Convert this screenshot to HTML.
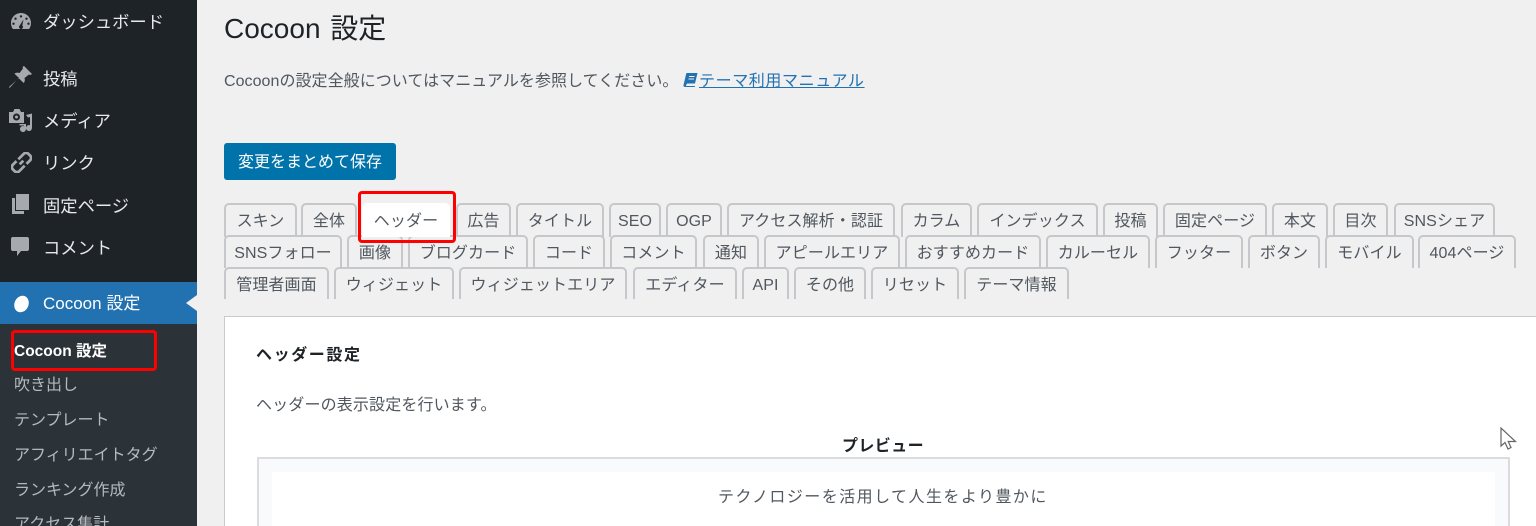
<!DOCTYPE html>
<html lang="ja"><head><meta charset="utf-8"><title>Cocoon 設定</title>
<style>
html,body{margin:0;padding:0;width:1536px;height:526px;overflow:hidden}
body{position:relative;background:#f0f0f1;font-family:"Liberation Sans","Noto Sans CJK JP",sans-serif;font-size:16px;color:#50575e}
#wrap{position:absolute;left:0;top:0;width:1536px;height:526px;overflow:hidden}
.a{position:absolute;white-space:nowrap;line-height:24px}
#side{position:absolute;left:0;top:0;width:197px;height:526px;background:#1d2327}
#sub{position:absolute;left:0;top:324px;width:197px;height:202px;background:#2c3338}
#act{position:absolute;left:0;top:282px;width:197px;height:42px;background:#2271b1}
#arrow{position:absolute;left:186px;top:295px;width:0;height:0;border:8px solid transparent;border-right:11px solid #f0f0f1;border-left:0}
.m{color:#e8e9ea;font-size:17.3px;left:43px}
.s{color:#b4b9be;font-size:16px;left:14px}
svg{position:absolute}
.t{position:absolute;box-sizing:border-box;border:2px solid #c6c7ca;border-bottom:0;border-radius:5px 5px 0 0;text-align:center;line-height:33px;font-size:16px;color:#50575e;white-space:nowrap;overflow:visible;letter-spacing:.1px}
.r1{top:203px;height:34px}.r2{top:235px;height:33px}.r3{top:267px;height:32px}
.on{background:#fff;z-index:2;border-color:#fff;color:#50575e}
.red{position:absolute;box-sizing:border-box;border:3px solid #f00;border-radius:4px;z-index:5}
#panel{position:absolute;left:224px;top:316px;width:1320px;height:220px;background:#fff;border:1px solid #c8cbce;box-sizing:border-box}
</style></head><body><div id="wrap">
<div id="side"></div><div id="sub"></div><div id="act"></div><div id="arrow"></div>

<svg style="left:10px;top:12px" width="22" height="18" viewBox="0 0 22 18"><path fill="#a7aaad" fill-rule="evenodd" d="M11 1C5.500 1 1 5.400 1 11c0 2.300.7 4.400 1.900 6h16.200c1.200-1.600 1.900-3.700 1.900-6 0-5.600-4.500-10-10-10zM11 3.200a1.200 1.200 0 110 2.400 1.200 1.200 0 010-2.400zM5.500 5.500a1.200 1.200 0 110 2.400 1.200 1.200 0 010-2.400zM16.500 5.500a1.200 1.200 0 110 2.400 1.200 1.200 0 010-2.400zM3.500 10.500a1.200 1.200 0 110 2.400 1.200 1.200 0 010-2.400zM18.500 10.500a1.200 1.200 0 110 2.400 1.200 1.200 0 010-2.400zM13.500 7.500l-1.200 6a2 2 0 11-2.600 0z"/></svg>
<svg style="left:9px;top:66px" width="24" height="23" viewBox="0 0 24 23"><path fill="#a7aaad" d="M15 0l8 8-1.500 1-1.500-.5-4.500 3.500c.7 2 .3 3.800-.8 5L9.500 12 1 21.500 0 22l.5-1.500L10 12 5.500 7.800c1.300-1.200 3-1.500 5-.8l3.500-4.500-.5-1.500z"/></svg>
<svg style="left:9px;top:109px" width="24" height="23" viewBox="0 0 24 23"><path fill="#a7aaad" fill-rule="evenodd" d="M4 3l1.500-3h5L12 3h3v11H0V3zM7.500 4.500a3.500 3.500 0 100 7 3.500 3.500 0 000-7zM7.500 6.500a1.500 1.500 0 110 3 1.500 1.500 0 010-3zM17 6l6-1.500V19a3 3 0 11-2-2.800V8l-2 .5zM10.500 15h6.500v5a3 3 0 11-2-2.800V16.500h-4.500z"/></svg>
<svg style="left:11px;top:152px" width="21" height="21" viewBox="0 0 23 23"><g fill="none" stroke="#a7aaad" stroke-width="3"><path d="M9.500 13.500l4-4M8 8l6-6a3.500 3.500 0 015 0l2 2a3.500 3.500 0 010 5l-4 4"/><path d="M15 15l-6 6a3.500 3.500 0 01-5 0l-2-2a3.500 3.500 0 010-5l4-4"/></g></svg>
<svg style="left:11px;top:194px" width="18" height="21" viewBox="0 0 18 21"><path fill="#a7aaad" d="M5 0h13v16H5zM1 4h3v13h9v3H1z"/></svg>
<svg style="left:11px;top:236px" width="18" height="21" viewBox="0 0 18 21"><path fill="#a7aaad" d="M2 1h14a2 2 0 012 2v10a2 2 0 01-2 2h-6l-4 5v-5H2a2 2 0 01-2-2V3a2 2 0 012-2z"/></svg>
<svg style="left:13px;top:295px" width="17" height="18" viewBox="0 0 17 18"><ellipse cx="8.500" cy="9" rx="7" ry="8.500" fill="#fff" transform="rotate(25 8.500 9)"/></svg>

<div class="a m" style="top:10px">ダッシュボード</div>
<div class="a m" style="top:67px">投稿</div>
<div class="a m" style="top:109px">メディア</div>
<div class="a m" style="top:151px">リンク</div>
<div class="a m" style="top:194px">固定ページ</div>
<div class="a m" style="top:236px">コメント</div>
<div class="a m" style="top:292px;color:#fff;font-size:17px">Cocoon 設定</div>
<div class="a s" style="top:340px;color:#fff;font-weight:bold;font-size:15.500px">Cocoon 設定</div>
<div class="a s" style="top:374px">吹き出し</div>
<div class="a s" style="top:409px">テンプレート</div>
<div class="a s" style="top:444px">アフィリエイトタグ</div>
<div class="a s" style="top:479px">ランキング作成</div>
<div class="a s" style="top:513px">アクセス集計</div>
<div class="red" style="left:11px;top:330px;width:146px;height:41px"></div>

<div class="a" style="left:224px;top:11px;font-size:28px;line-height:36px;color:#1d2327;word-spacing:2px">Cocoon 設定</div>
<div class="a" style="left:224px;top:70px;letter-spacing:.05px">Cocoonの設定全般についてはマニュアルを参照してください。</div>
<svg style="left:683px;top:72px" width="15" height="16" viewBox="0 0 15 16"><path fill="#2271b1" d="M4 1h10.500l-2.500 10.500H4L2.800 14H12l-.3 1H2C.8 15 .2 14 .6 12.800L3 2.500C3.200 1.600 3.500 1 4 1z"/><path stroke="#f0f0f1" stroke-width="1" d="M6 4.500h5.500M5.500 7h5.500"/></svg>
<div class="a" style="left:699px;top:70px;color:#2271b1;text-decoration:underline;letter-spacing:.6px">テーマ利用マニュアル</div>
<div class="a" style="left:224px;top:143px;width:172px;height:37px;background:#0073aa;border-radius:3px;color:#fff;text-align:center;line-height:39px">変更をまとめて保存</div>

<div class="t r1" style="left:224px;width:73px">スキン</div>
<div class="t r1" style="left:301px;width:56px">全体</div>
<div class="t r1 on" style="left:362px;width:88px">ヘッダー</div>
<div class="t r1" style="left:456px;width:55px">広告</div>
<div class="t r1" style="left:516px;width:88px">タイトル</div>
<div class="t r1" style="left:609px;width:52px">SEO</div>
<div class="t r1" style="left:666px;width:56px">OGP</div>
<div class="t r1" style="left:727px;width:168px">アクセス解析・認証</div>
<div class="t r1" style="left:901px;width:71px">カラム</div>
<div class="t r1" style="left:977px;width:121px">インデックス</div>
<div class="t r1" style="left:1103px;width:55px">投稿</div>
<div class="t r1" style="left:1163px;width:104px">固定ページ</div>
<div class="t r1" style="left:1272px;width:56px">本文</div>
<div class="t r1" style="left:1333px;width:55px">目次</div>
<div class="t r1" style="left:1394px;width:101px">SNSシェア</div>

<div class="t r2" style="left:224px;width:118px">SNSフォロー</div>
<div class="t r2" style="left:347px;width:56px">画像</div>
<div class="t r2" style="left:408px;width:120px">ブログカード</div>
<div class="t r2" style="left:533px;width:72px">コード</div>
<div class="t r2" style="left:610px;width:87px">コメント</div>
<div class="t r2" style="left:703px;width:56px">通知</div>
<div class="t r2" style="left:764px;width:136px">アピールエリア</div>
<div class="t r2" style="left:905px;width:136px">おすすめカード</div>
<div class="t r2" style="left:1046px;width:104px">カルーセル</div>
<div class="t r2" style="left:1155px;width:88px">フッター</div>
<div class="t r2" style="left:1248px;width:72px">ボタン</div>
<div class="t r2" style="left:1325px;width:89px">モバイル</div>
<div class="t r2" style="left:1418px;width:98px">404ページ</div>

<div class="t r3" style="left:224px;width:105px">管理者画面</div>
<div class="t r3" style="left:334px;width:120px">ウィジェット</div>
<div class="t r3" style="left:459px;width:168px">ウィジェットエリア</div>
<div class="t r3" style="left:633px;width:104px">エディター</div>
<div class="t r3" style="left:742px;width:47px">API</div>
<div class="t r3" style="left:794px;width:72px">その他</div>
<div class="t r3" style="left:871px;width:88px">リセット</div>
<div class="t r3" style="left:964px;width:105px">テーマ情報</div>
<div class="red" style="left:358px;top:191px;width:98px;height:52px"></div>

<div id="panel"></div>
<div class="a" style="left:256px;top:344px;font-weight:bold;color:#1d2327;letter-spacing:1.600px">ヘッダー設定</div>
<div class="a" style="left:256px;top:394px;letter-spacing:.15px">ヘッダーの表示設定を行います。</div>
<div class="a" style="left:842px;top:435px;font-weight:bold;color:#1d2327;letter-spacing:.4px">プレビュー</div>

<div style="position:absolute;left:257px;top:457px;width:1253px;height:80px;box-sizing:border-box;border:2px solid #dcdcde;background:#f9fafb"></div>
<div style="position:absolute;left:272px;top:472px;width:1223px;height:60px;background:#fff"></div>
<div class="a" style="left:718px;top:486px;letter-spacing:1.450px">テクノロジーを活用して人生をより豊かに</div>
<svg style="left:1500px;top:427px" width="17" height="24" viewBox="0 0 17 24"><path fill="#fff" stroke="#666" stroke-width="1.200" d="M1 1v18l4-3.500 3 6.500 3-1.500-2.800-6H15.500z"/></svg>
</div></body></html>
